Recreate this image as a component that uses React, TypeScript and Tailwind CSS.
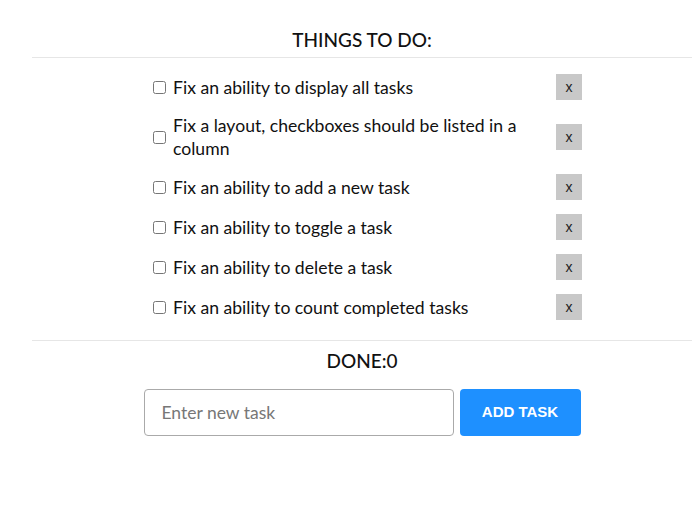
import { useState } from "react";

const initialTasks = [
  "Fix an ability to display all tasks",
  "Fix a layout, checkboxes should be listed in a column",
  "Fix an ability to add a new task",
  "Fix an ability to toggle a task",
  "Fix an ability to delete a task",
  "Fix an ability to count completed tasks",
];

export default function App() {
  const [tasks, setTasks] = useState(
    initialTasks.map((title, i) => ({ id: i, title, done: false }))
  );
  const [text, setText] = useState("");

  const done = tasks.filter((t) => t.done).length;

  const addTask = () => {
    if (!text.trim()) return;
    setTasks([...tasks, { id: Date.now(), title: text, done: false }]);
    setText("");
  };

  return (
    <div
      className="pl-[32px] text-[#111] bg-white min-h-screen"
      style={{ fontFamily: "Lato, 'Open Sans', sans-serif" }}
    >
      <h1 className="pt-[28px] pb-[5px] text-center text-[19px] leading-[24px] font-medium border-b border-[#e6e6e6]">
        THINGS TO DO:
      </h1>

      <ul className="w-[440px] ml-[110px] pt-[9px] pb-[13px]">
        {tasks.map((task) => (
          <li key={task.id} className="flex items-center py-[7px]">
            <input
              type="checkbox"
              checked={task.done}
              onChange={() =>
                setTasks(
                  tasks.map((t) => (t.id === task.id ? { ...t, done: !t.done } : t))
                )
              }
              className="ml-[11px] w-[13px] h-[13px] shrink-0"
            />
            <span className="flex-1 ml-[7px] mr-[30px] text-[17.6px] leading-[23px]">
              {task.title}
            </span>
            <button
              onClick={() => setTasks(tasks.filter((t) => t.id !== task.id))}
              className="w-[26px] h-[26px] shrink-0 bg-[#c8c8c8] text-[14px] leading-none text-[#222]"
              style={{ fontFamily: "'Liberation Sans', Arial, sans-serif" }}
            >
              x
            </button>
          </li>
        ))}
      </ul>

      <div className="border-t border-[#e6e6e6] pt-[8px] text-center text-[19px] leading-[24px] font-medium">
        DONE:{done}
      </div>

      <div className="flex justify-center gap-[6px] mt-[16px]">
        <input
          value={text}
          onChange={(e) => setText(e.target.value)}
          placeholder="Enter new task"
          className="w-[310px] h-[47px] border border-[#aaaaaa] rounded-[4px] px-[17px] text-[17.5px] placeholder:text-[#777] outline-none"
        />
        <button
          onClick={addTask}
          className="w-[121px] h-[47px] rounded-[4px] bg-[#1e90ff] text-white text-[15px] font-bold"
          style={{ fontFamily: "'Liberation Sans', Arial, sans-serif" }}
        >
          ADD TASK
        </button>
      </div>
    </div>
  );
}
